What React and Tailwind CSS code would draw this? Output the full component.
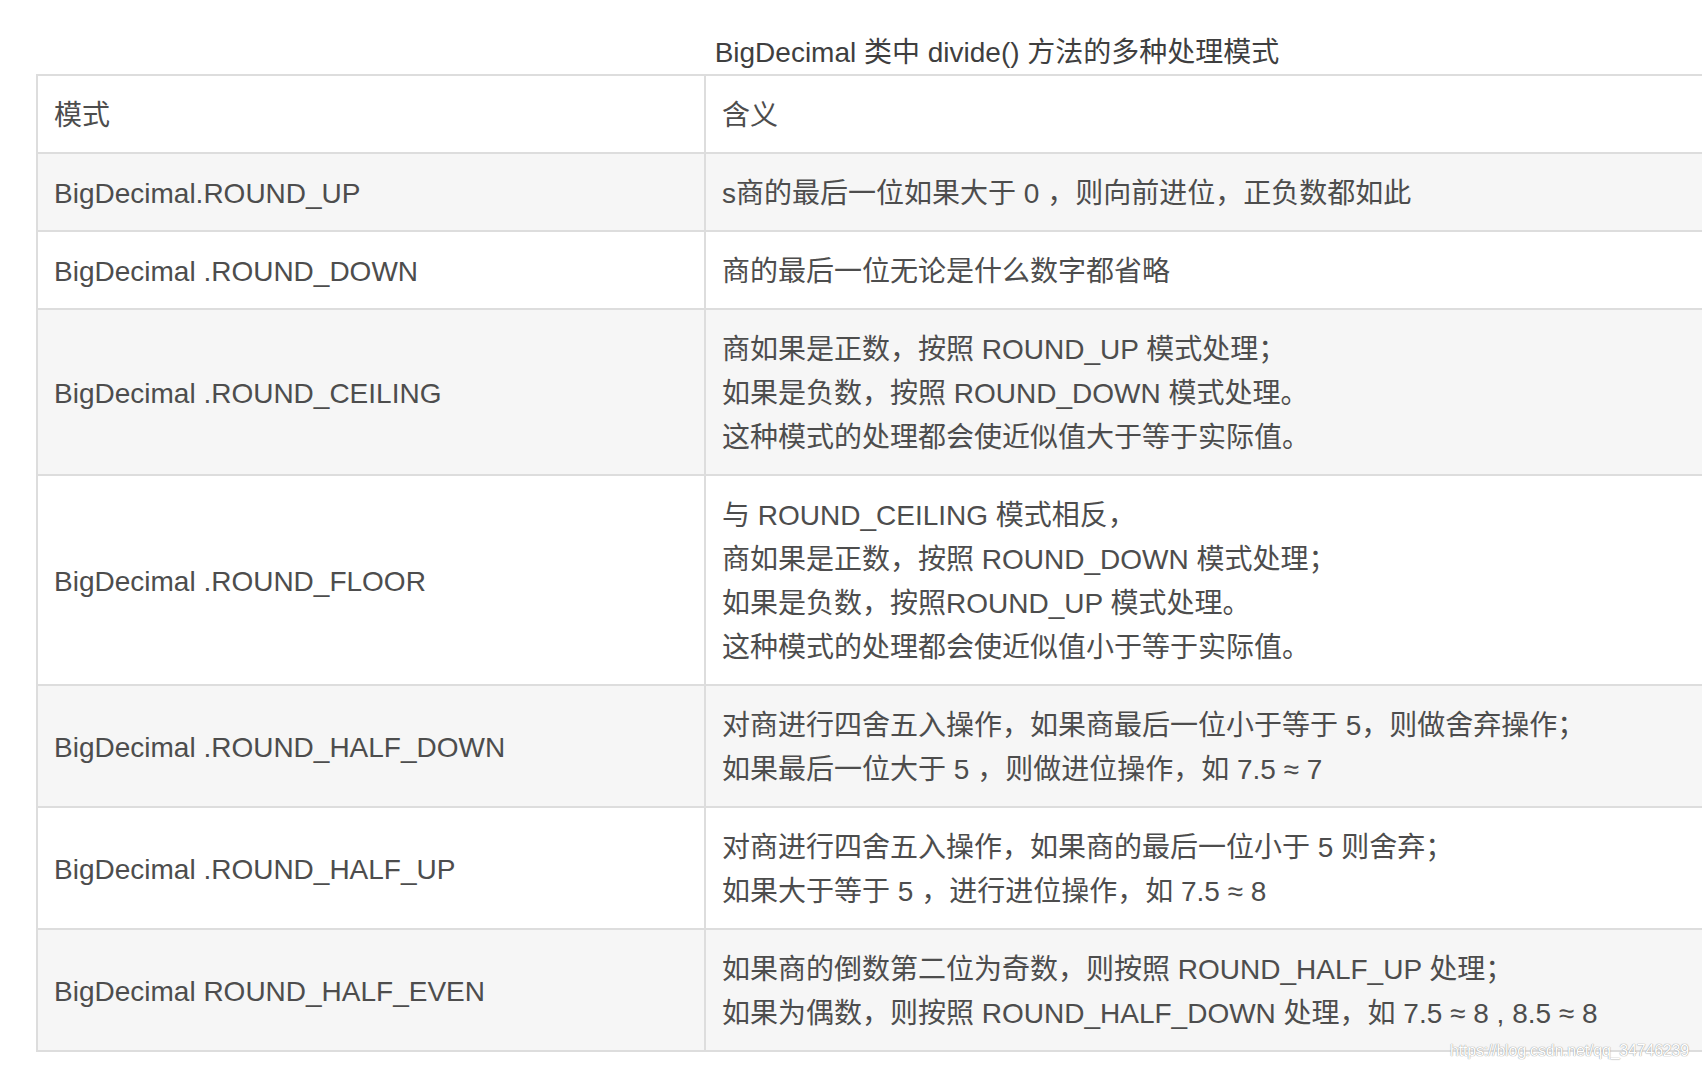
const rows = [
  { mode: "BigDecimal.ROUND_UP", lines: ["s商的最后一位如果大于 0 ，则向前进位，正负数都如此"] },
  { mode: "BigDecimal .ROUND_DOWN", lines: ["商的最后一位无论是什么数字都省略"] },
  {
    mode: "BigDecimal .ROUND_CEILING",
    lines: [
      "商如果是正数，按照 ROUND_UP 模式处理；",
      "如果是负数，按照 ROUND_DOWN 模式处理。",
      "这种模式的处理都会使近似值大于等于实际值。",
    ],
  },
  {
    mode: "BigDecimal .ROUND_FLOOR",
    lines: [
      "与 ROUND_CEILING 模式相反，",
      "商如果是正数，按照 ROUND_DOWN 模式处理；",
      "如果是负数，按照ROUND_UP 模式处理。",
      "这种模式的处理都会使近似值小于等于实际值。",
    ],
  },
  {
    mode: "BigDecimal .ROUND_HALF_DOWN",
    lines: [
      "对商进行四舍五入操作，如果商最后一位小于等于 5，则做舍弃操作；",
      "如果最后一位大于 5 ，则做进位操作，如 7.5 ≈ 7",
    ],
  },
  {
    mode: "BigDecimal .ROUND_HALF_UP",
    lines: [
      "对商进行四舍五入操作，如果商的最后一位小于 5 则舍弃；",
      "如果大于等于 5 ，进行进位操作，如 7.5 ≈ 8",
    ],
  },
  {
    mode: "BigDecimal ROUND_HALF_EVEN",
    lines: [
      "如果商的倒数第二位为奇数，则按照 ROUND_HALF_UP 处理；",
      "如果为偶数，则按照 ROUND_HALF_DOWN 处理，如 7.5 ≈ 8 , 8.5 ≈ 8",
    ],
  },
];

export default function App() {
  return (
    <div className="relative w-screen h-screen overflow-hidden bg-white font-['Liberation_Sans','Noto_Sans_CJK_SC',sans-serif] text-[28px] leading-[44px] text-[#4d4d4d]">
      <div className="pl-[36px] pt-[30px]">
        <div className="w-[1922px]">
          {/* caption */}
          <div className="pt-[2px] leading-[42px] text-center text-[#3f3f3f]">
            BigDecimal 类中 divide() 方法的多种处理模式
          </div>

          {/* table */}
          <div className="border-2 border-[#dddddd]">
            <div className="flex bg-white">
              <div className="w-[668px] shrink-0 border-r-2 border-[#dddddd] px-4 pt-[18px] pb-[14px]">模式</div>
              <div className="flex-1 px-4 pt-[18px] pb-[14px]">含义</div>
            </div>
            {rows.map((row, i) => (
              <div
                key={row.mode}
                className={`flex border-t-2 border-[#dddddd] ${i % 2 === 0 ? "bg-[#f6f6f6]" : "bg-white"}`}
              >
                <div className="w-[668px] shrink-0 border-r-2 border-[#dddddd] px-4 pt-[18px] pb-[14px] flex items-center">
                  {row.mode}
                </div>
                <div className="flex-1 px-4 pt-[18px] pb-[14px]">
                  {row.lines.map((line) => (
                    <div key={line}>{line}</div>
                  ))}
                </div>
              </div>
            ))}
          </div>
        </div>
      </div>

      {/* watermark */}
      <div className="absolute left-[1450px] top-[1039px] text-[16px] leading-[24px] tracking-[-0.2px] text-white [text-shadow:0_0_1px_#9a9a9a,0_0_1px_#9a9a9a]">
        https://blog.csdn.net/qq_34746239
      </div>
    </div>
  );
}
